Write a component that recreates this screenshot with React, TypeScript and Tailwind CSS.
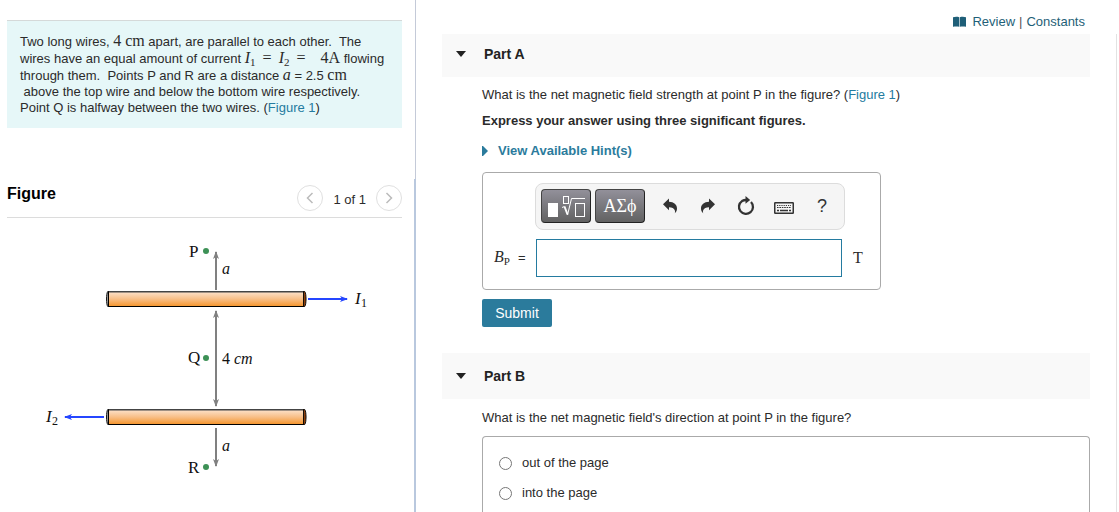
import React, { useState } from 'react';

const Sub: React.FC<{ children: React.ReactNode }> = ({ children }) => (
  <sub className="text-[11px] leading-none">{children}</sub>
);

const MathText: React.FC<{ children: React.ReactNode; className?: string }> = ({ children, className = '' }) => (
  <span className={`font-['Liberation_Serif',serif] text-base leading-none ${className}`}>{children}</span>
);

const BookIcon = () => (
  <svg width="13" height="12" viewBox="0 0 13 12" fill="currentColor" aria-hidden="true">
    <path d="M0 1.200C2 0.600 4.200 0.500 6.200 1.200v9.600C4.200 10.200 2 10.300 0 10.800z" />
    <path d="M6.800 1.200C8.800 0.500 11 0.600 13 1.200v9.600C11 10.300 8.800 10.200 6.800 10.800z" />
  </svg>
);

const TemplateIcon = () => (
  <svg width="38" height="24" viewBox="0 0 38 24" fill="none" stroke="white" aria-hidden="true">
    <rect x="1" y="9" width="10" height="14" fill="white" stroke="none" />
    <rect x="16.5" y="2.5" width="5" height="7" />
    <path d="M15 13.500l2.500-1" />
    <path d="M17.500 12.500l3 8" strokeWidth="2" />
    <path d="M20.500 21l4-16.500H38" />
    <rect x="28.5" y="9.5" width="9" height="13" />
  </svg>
);

const UndoIcon = () => (
  <svg width="14" height="16" viewBox="0 0 14 16" fill="currentColor" aria-hidden="true">
    <path d="M6 0.500v3.200c4.900.2 8 2.900 8 6.700 0 2-.8 3.600-2.200 4.900.4-1.200.4-2.200 0-3.100C11 10.200 9 9.200 6 9.200v3L0 6.300z" />
  </svg>
);

const RedoIcon = () => (
  <svg width="14" height="16" viewBox="0 0 14 16" fill="currentColor" aria-hidden="true">
    <path d="M8 0.500v3.200C3.100 3.900 0 6.600 0 10.400c0 2 .8 3.600 2.200 4.900-.4-1.200-.4-2.200 0-3.100C3 10.200 5 9.200 8 9.200v3l6-5.900z" />
  </svg>
);

const ResetIcon = () => (
  <svg width="18" height="20" viewBox="0 0 18 20" fill="none" stroke="currentColor" aria-hidden="true">
    <path d="M14 6a7 7 0 1 1-9-.9Q7 3.900 9.500 4" strokeWidth="2.300" />
    <path d="M8.500 0l4.700 4-4.700 3.800z" fill="currentColor" stroke="none" />
  </svg>
);

const KeyboardIcon = () => (
  <svg width="20" height="12" viewBox="0 0 20 12" fill="none" stroke="currentColor" aria-hidden="true">
    <rect x="0.750" y="0.750" width="18.500" height="10.500" rx="0.500" strokeWidth="1.500" />
    <path d="M3 3.500h14" strokeDasharray="1.200 1" />
    <path d="M3 5.500h14" strokeDasharray="1.600 0.800" />
    <path d="M3 8.500h2m1 0h8m1 0h2" strokeWidth="1.400" />
  </svg>
);

const Chevron: React.FC<{ d: string }> = ({ d }) => (
  <svg width="8" height="12" viewBox="0 0 8 12" fill="none" stroke="currentColor" strokeWidth="1.500" aria-hidden="true">
    <path d={d} />
  </svg>
);

const Wire: React.FC<{ y: number }> = ({ y }) => (
  <g transform={`translate(106 ${y})`}>
    <rect x="2" y="0.500" width="196" height="15" fill="url(#copper)" />
    <path d="M2 0.700h196" stroke="#444" strokeWidth="1.400" />
    <path d="M2 15.500h196" stroke="black" />
    <path d="M1.800 0.500c-1.600 1.500-1.600 13.500 0 15h.7v-15z" fill="#aaa" stroke="black" />
    <path d="M197.500 0.500h1.200c1.800 1.500 1.800 13.500 0 15h-1.200z" fill="#8a3f0c" stroke="black" strokeWidth="0.900" />
  </g>
);

const WiresDiagram = () => (
  <svg width="395" height="290" viewBox="7 218 395 290" role="img" aria-label="Two parallel wires" className="block max-w-full">
    <defs>
      <linearGradient id="copper" x1="0" y1="0" x2="0" y2="1">
        <stop offset="0" stopColor="#fde4cf" />
        <stop offset="0.500" stopColor="#f8bf88" />
        <stop offset="1" stopColor="#f5942a" />
      </linearGradient>
      <marker id="greyTip" orient="auto-start-reverse" markerUnits="userSpaceOnUse" markerWidth="9" markerHeight="6" refX="7" refY="3">
        <path d="M0 0l8 3-8 3 2-3z" fill="#808080" />
      </marker>
      <marker id="blueTip" orient="auto" markerUnits="userSpaceOnUse" markerWidth="9" markerHeight="6" refX="7" refY="3">
        <path d="M0 0l8 3-8 3 2-3z" fill="#2546ff" />
      </marker>
    </defs>

    <g stroke="#808080" strokeWidth="2" fill="none">
      <path d="M216 290V252" markerEnd="url(#greyTip)" />
      <path d="M216 311V406" markerStart="url(#greyTip)" markerEnd="url(#greyTip)" />
      <path d="M216 428V466" markerEnd="url(#greyTip)" />
    </g>
    <g stroke="#2546ff" strokeWidth="2" fill="none">
      <path d="M308 299H347" markerEnd="url(#blueTip)" />
      <path d="M104 417H65" markerEnd="url(#blueTip)" />
    </g>

    <Wire y={291} />
    <Wire y={409} />

    <g fill="#3d9156">
      <circle cx="206" cy="251" r="3" />
      <circle cx="206" cy="358" r="3" />
      <circle cx="206" cy="467" r="3" />
    </g>

    <g className="font-['Liberation_Serif',serif] text-[17px]" fill="#111">
      <text x="189" y="257">P</text>
      <text x="188" y="363">Q</text>
      <text x="188" y="473">R</text>
      <g fontStyle="italic">
        <text x="222" y="274" className="text-base">a</text>
        <text x="222" y="364" className="text-base"><tspan fontStyle="normal">4</tspan> cm</text>
        <text x="222" y="451" className="text-base">a</text>
        <text x="355" y="304">I</text>
        <text x="46" y="422">I</text>
      </g>
      <text x="361" y="307" className="text-xs">1</text>
      <text x="52" y="425" className="text-xs">2</text>
    </g>
  </svg>
);

const PartHeader: React.FC<{ title: string; className: string }> = ({ title, className }) => (
  <h2 className={`flex items-center bg-[#f9f9f9] pl-3.5 text-sm font-bold text-[#222] ${className}`}>
    <svg width="10" height="6" viewBox="0 0 10 6" fill="currentColor" className="mr-[18px]" aria-hidden="true">
      <path d="M0 0h10L5 6z" />
    </svg>
    {title}
  </h2>
);

const templateButton =
  'flex h-[34px] w-[50px] items-center justify-center rounded border border-[#444] border-r-[#222] border-b-[#222] bg-linear-to-b from-[#92909a] to-[#626262] text-white';
const toolButton = 'flex h-[34px] w-[38px] items-center justify-center text-[#333]';
const pagerButton = 'flex size-[26px] items-center justify-center rounded-full border border-[#e0e0e0] text-[#bbb]';

const directions = ['out of the page', 'into the page'];

export default function App() {
  const [answer, setAnswer] = useState('');
  const [direction, setDirection] = useState('');

  return (
    <div className="grid h-screen grid-cols-[416fr_703fr] overflow-hidden bg-white font-['Liberation_Sans',Arial,sans-serif] text-[13px] text-[#2b2b2b]">
      {/* Problem and figure */}
      <aside className="flex min-w-0 flex-col">
        <div className="h-[179px] border-r border-[#c4cad8] pt-5 pr-[13px] pl-[7px]">
          <p className="h-[108px] border-t border-[#d5d9d9] bg-[#e6f7f8] px-[13px] pt-3 leading-4">
            Two long wires, <MathText>4 cm</MathText> apart, are parallel to each other.&nbsp; The
            <br />
            wires have an equal amount of current{' '}
            <MathText>
              <i>I</i><Sub>1</Sub> <span className="mx-[3px]">=</span> <i>I</i><Sub>2</Sub>{' '}
              <span className="mx-[3px]">=</span>&nbsp;&nbsp; 4A
            </MathText>{' '}
            flowing
            <br />
            through them.&nbsp; Points P and R are a distance <MathText className="italic">a</MathText> = 2.5{' '}
            <MathText>cm</MathText>
            <br />
            &nbsp;above the top wire and below the bottom wire respectively.
            <br />
            Point Q is halfway between the two wires. (<a href="#figure" className="text-[#247ba0]">Figure 1</a>)
          </p>
        </div>

        <section id="figure" className="flex-1 border-r-2 border-[#b9c8de] pr-3 pl-[7px]">
          <div className="flex h-[39px] items-center justify-between border-b border-[#dcdcdc]">
            <h2 className="pb-2 text-base font-bold text-black">Figure</h2>
            <div className="flex items-center gap-2.5">
              <button type="button" aria-label="Previous figure" className={pagerButton}>
                <Chevron d="M6.500 1L1.500 6l5 5" />
              </button>
              <span className="pt-1">1 of 1</span>
              <button type="button" aria-label="Next figure" className={pagerButton}>
                <Chevron d="M1.500 1l5 5-5 5" />
              </button>
            </div>
          </div>
          <WiresDiagram />
        </section>
      </aside>

      {/* Questions */}
      <main className="flex min-w-0 flex-col pr-0.5 pl-[26px]">
        <div className="flex h-[34px] shrink-0 items-center justify-end pt-2.5 pr-8 text-[#1f5f78]">
          <BookIcon />
          <a href="#review" className="ml-1.5">Review</a>
          <span className="mx-1 text-[#555]">|</span>
          <a href="#constants">Constants</a>
        </div>

        <div className="flex flex-1 flex-col border-r border-[#e2e2e2] pr-[26px]">
          <PartHeader title="Part A" className="h-[43px] pb-1" />
          <div className="pl-10 leading-5">
            <p className="pt-2">
              What is the net magnetic field strength at point P in the figure? (
              <a href="#figure" className="text-[#247ba0]">Figure 1</a>)
            </p>
            <p className="mt-1.5 font-bold">Express your answer using three significant figures.</p>
            <button type="button" className="mt-2.5 flex items-center gap-2.5 font-bold text-[#2b7b9c]">
              <svg width="6" height="10" viewBox="0 0 6 10" fill="currentColor" aria-hidden="true">
                <path d="M0 0h1l5 5-5 5H0z" />
              </svg>
              View Available Hint(s)
            </button>

            <div className="mt-[11px] w-[399px] max-w-full rounded border border-[#aaa] pt-2.5 pb-3">
              <div className="ml-[52px] flex h-[47px] w-[310px] items-center rounded-lg border border-[#dcdcdc] bg-[#f5f5f5] pb-0.5 pl-[5px]">
                <button type="button" aria-label="Templates" className={`${templateButton} mr-1`}>
                  <TemplateIcon />
                </button>
                <button type="button" className={`${templateButton} mr-1.5 font-['Liberation_Serif',serif] text-lg`}>
                  ΑΣϕ
                </button>
                <button type="button" aria-label="Undo" className={toolButton}><UndoIcon /></button>
                <button type="button" aria-label="Redo" className={toolButton}><RedoIcon /></button>
                <button type="button" aria-label="Reset" className={toolButton}><ResetIcon /></button>
                <button type="button" aria-label="Keyboard" className={`${toolButton} pt-1`}><KeyboardIcon /></button>
                <button type="button" className={`${toolButton} text-lg`}>?</button>
              </div>
              <div className="mt-[9px] flex items-center">
                <label htmlFor="answer" className="flex w-[53px] shrink-0 items-baseline gap-2 pl-[11px]">
                  <MathText><i>B</i><Sub>P</Sub></MathText> =
                </label>
                <input
                  id="answer"
                  value={answer}
                  onChange={e => setAnswer(e.target.value)}
                  className="h-[38px] w-[306px] border border-[#247ba0] bg-white px-2 outline-none"
                />
                <MathText className="ml-[11px]">T</MathText>
              </div>
            </div>

            <button type="button" className="mt-[9px] block h-7 w-[70px] rounded-xs bg-[#2b7b9c] text-sm text-white">
              Submit
            </button>
          </div>

          <PartHeader title="Part B" className="mt-[26px] h-[46px]" />
          <div className="flex flex-1 flex-col pt-[9px] pl-10 leading-5">
            <p id="direction">What is the net magnetic field's direction at point P in the figure?</p>
            <div
              role="radiogroup"
              aria-labelledby="direction"
              className="mt-2 flex flex-1 flex-col gap-2.5 rounded-t border border-b-0 border-[#aaa] px-4 pt-4"
            >
              {directions.map(option => (
                <label key={option} className="flex items-center gap-2.5">
                  <input
                    type="radio"
                    name="direction"
                    checked={direction === option}
                    onChange={() => setDirection(option)}
                    className="size-[13px]"
                  />
                  {option}
                </label>
              ))}
            </div>
          </div>
        </div>
      </main>
    </div>
  );
}
